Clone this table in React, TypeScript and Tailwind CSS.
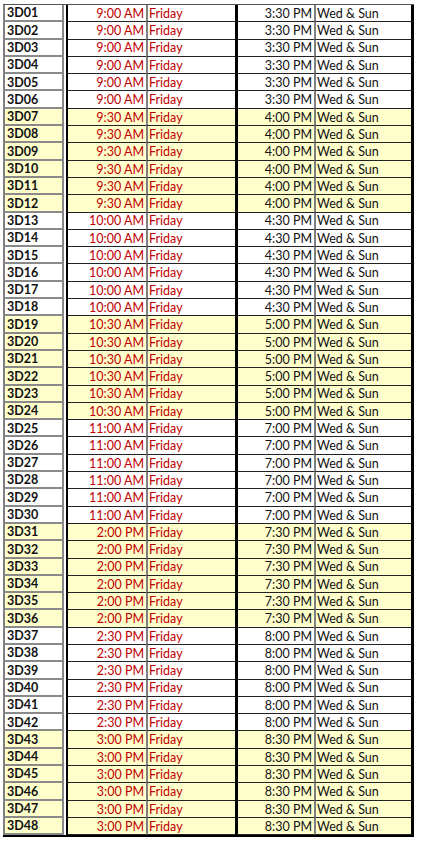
import React from "react";

const t1 = ["9:00 AM", "9:30 AM", "10:00 AM", "10:30 AM", "11:00 AM", "2:00 PM", "2:30 PM", "3:00 PM"];
const t2 = ["3:30 PM", "4:00 PM", "4:30 PM", "5:00 PM", "7:00 PM", "7:30 PM", "8:00 PM", "8:30 PM"];

const rows = Array.from({ length: 48 }, (_, i) => {
  const g = Math.floor(i / 6);
  return {
    code: "3D" + String(i + 1).padStart(2, "0"),
    a: t1[g],
    b: t2[g],
    yellow: g % 2 === 1,
  };
});

export default function App() {
  return (
    <div
      className="bg-white w-[421px] h-[841px] pt-[4px] pl-[3px] text-[12.5px] leading-none"
      style={{ fontFamily: "Lato, 'Open Sans', sans-serif" }}
    >
      <div className="flex flex-col w-[411px] border-t border-[#555] border-b-2 border-b-black">
        {rows.map((r) => (
          <div
            key={r.code}
            className={`flex h-[17.3px] ${r.yellow ? "bg-[#ffffcc]" : "bg-white"}`}
          >
            <div className="w-[61px] border-l-2 border-l-[#7f7f7f] border-r-2 border-r-[#8a8a8a] border-b-2 border-b-[#8a8a8a] flex items-center pt-[2px] pl-[2px] font-bold text-[#111]">
              {r.code}
            </div>
            <div className="w-[2px] bg-white" />
            <div className="w-[80px] border-l-2 border-l-black border-b border-b-[#222] flex items-center justify-end pt-[2px] pr-[2px] text-[#c00000]">
              {r.a}
            </div>
            <div className="w-[89px] border-l-2 border-l-[#808080] border-b border-b-[#222] flex items-center pt-[2px] pl-[1px] text-[#c00000]">
              Friday
            </div>
            <div className="w-[79px] border-l-[3px] border-l-black border-b border-b-[#222] flex items-center justify-end pt-[2px] pr-[2px] text-[#111]">
              {r.b}
            </div>
            <div className="w-[100px] border-l-2 border-l-[#808080] border-r-[3px] border-r-black border-b border-b-[#222] flex items-center pt-[2px] pl-[1px] text-[#111]">
              Wed &amp; Sun
            </div>
          </div>
        ))}
      </div>
    </div>
  );
}
